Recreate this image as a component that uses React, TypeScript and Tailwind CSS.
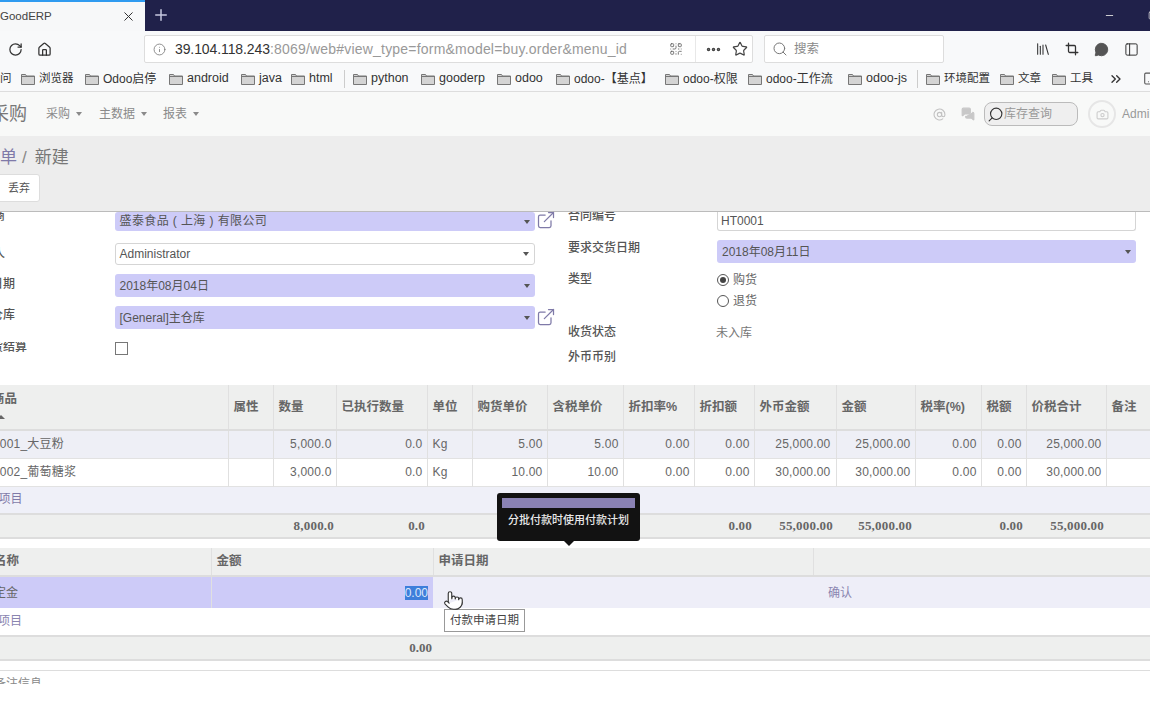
import type { ReactNode } from "react"
import { AtSign, Camera, ChevronsRight, Crop, Ellipsis, ExternalLink, Home, Info, Library, MessageCircle, MessagesSquare, PanelLeft, Pointer, QrCode, RotateCw, Search, Smartphone, Star, X, Plus, Minus, Square } from "lucide-react"

const SANS = "font-['Liberation_Sans','Noto_Sans_CJK_SC',sans-serif]"

const bookmarks = [
  { name: "浏览器", width: "w-[64px]", size: "text-[11.5px]" },
  { name: "Odoo启停", width: "w-[84px]", size: "text-[12px]" },
  { name: "android", width: "w-[72px]", size: "text-[12.5px]" },
  { name: "java", width: "w-[50px]", size: "text-[12.5px]" },
  { name: "html", width: "w-[53px]", size: "text-[12.5px]" },
  { sep: true, width: "w-[9px]" },
  { name: "python", width: "w-[68px]", size: "text-[12.5px]" },
  { name: "gooderp", width: "w-[76px]", size: "text-[12.5px]" },
  { name: "odoo", width: "w-[59px]", size: "text-[12.5px]" },
  { name: "odoo-【基点】", width: "w-[109px]", size: "text-[12px]" },
  { name: "odoo-权限", width: "w-[83px]", size: "text-[12px]" },
  { name: "odoo-工作流", width: "w-[100px]", size: "text-[12px]" },
  { name: "odoo-js", width: "w-[69px]", size: "text-[12.5px]" },
  { sep: true, width: "w-[9px]" },
  { name: "环境配置", width: "w-[74px]", size: "text-[11.5px]" },
  { name: "文章", width: "w-[52px]", size: "text-[11.5px]" },
  { name: "工具", width: "w-[56px]", size: "text-[11.5px]" },
]

const columns = [228, 45, 63, 91, 45, 75, 76, 71, 60, 82, 79, 66, 45, 80, 44]
const headers = ["属性", "数量", "已执行数量", "单位", "购货单价", "含税单价", "折扣率%", "折扣额", "外币金额", "金额", "税率(%)", "税额", "价税合计", "备注"]

const lines = [
  { code: "0001_大豆粉", qty: "5,000.0", price: "5.00", amount: "25,000.00", bg: "bg-[#eeeff6]" },
  { code: "0002_葡萄糖浆", qty: "3,000.0", price: "10.00", amount: "30,000.00", bg: "bg-white" },
]

function Folder() {
  return (
    <svg width="14" height="12" viewBox="0 0 14 12" className="shrink-0">
      <path d="M.5 1.5h4l1 1.5h8v8.5H.5z" fill="#d4d4d4" stroke="#777" />
      <path d="M.5 3.5h13" stroke="#777" />
    </svg>
  )
}

function Caret({ className = "border-t-[#555]" }: { className?: string }) {
  return <span className={`inline-block border-x-[3.5px] border-t-[4px] border-x-transparent ${className}`} />
}

function Field({ value, required, className = "" }: { value: string; required?: boolean; className?: string }) {
  const tone = required ? "bg-[#cdcbf8] pl-[5px]" : "bg-white border border-[#d5d5d5] pl-[4px]"
  return (
    <div className={`flex h-full items-center justify-between rounded-[3px] pr-[5px] text-[12px] text-[#555] ${tone}`}>
      <span className={className}>{value}</span>
      <Caret />
    </div>
  )
}

function NavItem({ label }: { label: string }) {
  return (
    <span className="flex shrink-0 items-center gap-[6px] whitespace-nowrap text-[12px] text-[#8a8a8a]">
      {label}
      <Caret className="border-t-[#8a8a8a]" />
    </span>
  )
}

function LeftRow({ label, offset, height, mt, children }: { label: string; offset: string; height: string; mt: string; children: ReactNode }) {
  return (
    <div className={`flex ${height} ${mt}`}>
      <div className="w-[114.5px] shrink-0 overflow-hidden">
        <span className={`block whitespace-nowrap text-[12px] font-medium text-[#555] ${offset}`}>{label}</span>
      </div>
      <div className="w-[420.5px] shrink-0">{children}</div>
    </div>
  )
}

export default function App() {
  return (
    <div className={`relative flex h-[719px] w-[1150px] flex-col overflow-hidden bg-white ${SANS}`}>
      {/* browser tab strip */}
      <div className="flex h-[31px] shrink-0 items-stretch bg-[#20214a]">
        <div className="flex w-[145px] items-center justify-between border-t-2 border-[#2f9bf0] bg-[#f7f8f9] pr-[9px] text-[11.5px] text-[#444]">
          <span>GoodERP</span>
          <X size={15} strokeWidth={1.6} className="text-[#333]" />
        </div>
        <Plus size={18} strokeWidth={2} className="ml-[7px] mt-[6px] text-[#c6c8df]" />
        <div className="ml-auto flex items-center">
          <Minus size={11} className="text-[#ddd]" />
          <Square size={9} className="ml-[33px] mr-[-7px] text-[#ddd]" />
        </div>
      </div>

      {/* browser toolbar */}
      <div className="flex h-[35px] shrink-0 items-center bg-[#f8f9fa] pt-[1px] text-[#333]">
        <RotateCw size={15} strokeWidth={2} className="ml-[8px]" />
        <Home size={15} strokeWidth={2} className="ml-[14px]" />
        <div className="ml-[92px] flex h-[28px] w-[609px] items-center rounded-[2px] border border-[#ddd] bg-white">
          <Info size={13} strokeWidth={1.5} className="ml-[8px] text-[#777]" />
          <div className="ml-[9px] w-[452px] overflow-hidden whitespace-nowrap text-[14px] tracking-[-0.1px] text-[#999]">
            <span className="text-[#333]">39.104.118.243</span>
            <span className="tracking-[0.2px]">:8069/web#view_type=form&amp;model=buy.order&amp;menu_id</span>
          </div>
          <QrCode size={14} strokeWidth={1.5} className="ml-[42px] text-[#666]" />
          <div className="ml-[12px] h-[26px] w-px bg-[#e8e8e8]" />
          <Ellipsis size={17} strokeWidth={3} className="ml-[9px] text-[#444]" />
          <Star size={16} strokeWidth={1.8} className="ml-[10px] text-[#444]" />
        </div>
        <div className="ml-[11px] flex h-[28px] w-[180px] items-center rounded-[2px] border border-[#ddd] bg-white">
          <Search size={16} strokeWidth={1.5} className="ml-[7px] text-[#777]" />
          <span className="ml-[6px] text-[12.5px] text-[#8a8a8a]">搜索</span>
        </div>
        <Library size={16} strokeWidth={1.6} className="ml-[91px]" />
        <Crop size={14} strokeWidth={2.2} className="ml-[14px]" />
        <MessageCircle size={15} fill="#555" strokeWidth={1.5} className="ml-[15px] text-[#555]" />
        <PanelLeft size={15} strokeWidth={1.6} className="ml-[15px]" />
      </div>

      {/* bookmarks bar */}
      <div className="flex h-[26px] shrink-0 items-center border-b border-[#ddd] bg-[#f8f9fa] text-[#333]">
        <span className="w-[21px] shrink-0 text-[11.5px]">问</span>
        {bookmarks.map((item, i) =>
          item.sep ? (
            <div key={i} className={`${item.width} h-[18px] shrink-0`}>
              <div className="h-full w-px bg-[#ccc]" />
            </div>
          ) : (
            <div key={i} className={`${item.width} ${item.size} flex shrink-0 items-center gap-[4px] whitespace-nowrap`}>
              <Folder />
              <span>{item.name}</span>
            </div>
          ),
        )}
        <ChevronsRight size={16} className="ml-[0px] shrink-0" />
        <Smartphone size={13} className="ml-[18px] shrink-0 text-[#555]" />
      </div>

      {/* app navbar */}
      <div className="flex h-[44px] shrink-0 items-center bg-[#f8f9f8]">
        <span className="-ml-[9px] w-[55px] shrink-0 text-[18px] text-[#777]">采购</span>
        <NavItem label="采购" />
        <div className="w-[17px] shrink-0" />
        <NavItem label="主数据" />
        <div className="w-[16px] shrink-0" />
        <NavItem label="报表" />
        <AtSign size={13} className="ml-[734px] shrink-0 text-[#c2c2c2]" />
        <MessagesSquare size={14} fill="#c8c8c8" className="ml-[15px] shrink-0 text-[#c8c8c8]" />
        <div className="ml-[9px] flex h-[24px] w-[94px] shrink-0 items-center rounded-[8px] border border-[#bbb] bg-[#efefef]">
          <Search size={17} strokeWidth={1.6} className="ml-[2px] -scale-x-100 text-[#333]" />
          <span className="text-[12px] text-[#999]">库存查询</span>
        </div>
        <div className="ml-[10px] flex h-[28px] w-[28px] shrink-0 items-center justify-center rounded-full border-2 border-[#e6e6e6]">
          <Camera size={13} className="text-[#ccc]" />
        </div>
        <span className="ml-[6px] shrink-0 text-[12px] text-[#999]">Admin</span>
      </div>

      {/* control panel */}
      <div className="h-[76px] shrink-0 border-b border-[#bbb] bg-[#ededed]">
        <div className="-ml-[17px] mt-[11px] flex h-[22px] items-center text-[17px]">
          <span className="text-[#7f7aa8]">订单</span>
          <span className="ml-[5px] text-[#888]">/</span>
          <span className="ml-[8px] text-[#777]">新建</span>
        </div>
        <div className="-ml-[4px] mt-[5px] flex h-[28px] w-[44px] items-center justify-center rounded-[3px] border border-[#ddd] bg-white text-[11px] text-[#555]">
          <span className="ml-[2px]">丢弃</span>
        </div>
      </div>

      {/* form header, scrolled so the first row is cut */}
      <div className="flex h-[173px] shrink-0">
        <div className="w-[568px] shrink-0">
          <div className="flex h-[19px]">
            <div className="w-[114.5px] shrink-0 overflow-hidden">
              <span className="-ml-[7px] -mt-[5px] block whitespace-nowrap text-[12px] font-medium text-[#555]">商</span>
            </div>
            <div className="w-[420.5px] shrink-0"><Field value="盛泰食品 ( 上海 ) 有限公司" required className="-mt-[1px] tracking-[0.4px]" /></div>
            <ExternalLink size={20} strokeWidth={1.5} className="ml-[1px] -mt-[2px] text-[#7f7aa8]" />
          </div>
          <LeftRow label="负责人" offset="-ml-[31px] mt-[2px]" height="h-[22px]" mt="mt-[12px]">
            <Field value="Administrator" />
          </LeftRow>
          <LeftRow label="单据日期" offset="-ml-[33px] mt-[1px]" height="h-[23px]" mt="mt-[9px]">
            <Field value="2018年08月04日" required />
          </LeftRow>
          <div className="mt-[9px] flex h-[23px]">
            <div className="w-[114.5px] shrink-0 overflow-hidden">
              <span className="-ml-[33px] block whitespace-nowrap text-[12px] font-medium text-[#555]">调入仓库</span>
            </div>
            <div className="w-[420.5px] shrink-0"><Field value="[General]主仓库" required /></div>
            <ExternalLink size={20} strokeWidth={1.5} className="ml-[1px] mt-[1px] text-[#7f7aa8]" />
          </div>
          <div className="mt-[13px] flex h-[14px]">
            <div className="w-[114.5px] shrink-0 overflow-hidden">
              <span className="-ml-[33px] -mt-[4px] block whitespace-nowrap text-[12px] font-medium text-[#555]">按收货结算</span>
            </div>
            <div className="h-[13px] w-[13px] border border-[#777] bg-white" />
          </div>
        </div>
        <div className="w-[568px] shrink-0 text-[12px] font-medium text-[#555]">
          <div className="flex h-[19px]">
            <div className="w-[149px] shrink-0 overflow-hidden"><span className="-mt-[5px] block">合同编号</span></div>
            <div className="flex h-[19px] w-[419px] items-center rounded-b-[3px] border border-t-0 border-[#d5d5d5] pl-[3px] text-[12px] font-normal text-[#555]">HT0001</div>
          </div>
          <div className="mt-[9px] flex h-[23px]">
            <div className="-mt-[1px] w-[149px] shrink-0">要求交货日期</div>
            <div className="w-[419px] font-normal"><Field value="2018年08月11日" required /></div>
          </div>
          <div className="mt-[7px] flex h-[48px]">
            <div className="w-[149px] shrink-0">类型</div>
            <div className="flex flex-col gap-[3px] pt-[1px] text-[12px] font-normal text-[#666]">
              <label className="flex items-center gap-[4px]">
                <span className="flex h-[12px] w-[12px] items-center justify-center rounded-full border border-[#555]">
                  <span className="h-[6px] w-[6px] rounded-full bg-[#444]" />
                </span>
                购货
              </label>
              <label className="flex items-center gap-[4px]">
                <span className="h-[12px] w-[12px] rounded-full border border-[#555]" />
                退货
              </label>
            </div>
          </div>
          <div className="mt-[5px] flex h-[18px]">
            <div className="w-[148px] shrink-0">收货状态</div>
            <div className="mt-[1px] text-[12px] font-normal text-[#777]">未入库</div>
          </div>
          <div className="mt-[7px]">外币币别</div>
        </div>
      </div>

      {/* order lines */}
      <table className="w-[1150px] shrink-0 table-fixed border-collapse text-[12px] text-[#666]">
        <colgroup>
          {columns.map((w, i) => (
            <col key={i} style={{ width: w }} />
          ))}
        </colgroup>
        <thead>
          <tr className="h-[45px] border-b-2 border-[#ddd] bg-[#eeefee] text-left font-bold text-[#666]">
            <th className="overflow-hidden p-0 align-top">
              <span className="-ml-[8px] mt-[5px] block text-[12.5px]">商品</span>
              <span className="ml-[-3px] mt-[6px] block h-0 w-0 border-x-[4px] border-b-[4px] border-x-transparent border-b-[#666]" />
            </th>
            {headers.map((h) => (
              <th key={h} className="border-l border-[#e0e0e0] pl-[5px] text-[12.5px] font-bold">{h}</th>
            ))}
          </tr>
        </thead>
        <tbody className="tracking-[0.2px]">
          {lines.map((row) => (
            <tr key={row.code} className={`h-[28px] border-b border-[#e2e2e2] text-right ${row.bg}`}>
              <td className="overflow-hidden text-left">
                <span className="-ml-[7px] block whitespace-nowrap">{row.code}</span>
              </td>
              <td className="border-l border-[#e0e0e0]" />
              <td className="border-l border-[#e0e0e0] pr-[4px]">{row.qty}</td>
              <td className="border-l border-[#e0e0e0] pr-[4px]">0.0</td>
              <td className="border-l border-[#e0e0e0] pl-[5px] text-left">Kg</td>
              <td className="border-l border-[#e0e0e0] pr-[4px]">{row.price}</td>
              <td className="border-l border-[#e0e0e0] pr-[4px]">{row.price}</td>
              <td className="border-l border-[#e0e0e0] pr-[4px]">0.00</td>
              <td className="border-l border-[#e0e0e0] pr-[4px]">0.00</td>
              <td className="border-l border-[#e0e0e0] pr-[5px]">{row.amount}</td>
              <td className="border-l border-[#e0e0e0] pr-[4px]">{row.amount}</td>
              <td className="border-l border-[#e0e0e0] pr-[4px]">0.00</td>
              <td className="border-l border-[#e0e0e0] pr-[4px]">0.00</td>
              <td className="border-l border-[#e0e0e0] pr-[4px]">{row.amount}</td>
              <td className="border-l border-[#e0e0e0]" />
            </tr>
          ))}
          <tr className="h-[28px] bg-[#eff0f8]">
            <td colSpan={15} className="overflow-hidden">
              <span className="-ml-[26px] -mt-[1px] block text-[#7f7aa8]">添加项目</span>
            </td>
          </tr>
          <tr className="h-[24px] border-y-2 border-[#ddd] bg-[#eeefee] text-right font-['Liberation_Serif',serif] text-[13px] font-bold text-[#666]">
            <td />
            <td />
            <td className="pr-[2px]">8,000.0</td>
            <td className="pr-[2px]">0.0</td>
            <td />
            <td />
            <td />
            <td />
            <td className="pr-[2px]">0.00</td>
            <td className="pr-[3px]">55,000.00</td>
            <td className="pr-[3px]">55,000.00</td>
            <td />
            <td className="pr-[3px]">0.00</td>
            <td className="pr-[2px]">55,000.00</td>
            <td />
          </tr>
        </tbody>
      </table>

      {/* payment plan */}
      <table className="mt-[9px] w-[1150px] shrink-0 table-fixed border-collapse text-[12px] text-[#666]">
        <colgroup>
          <col className="w-[211px]" />
          <col className="w-[222px]" />
          <col className="w-[380px]" />
          <col />
        </colgroup>
        <thead>
          <tr className="h-[28px] border-b-2 border-[#ddd] bg-[#eeefee] text-left text-[12.5px] font-bold">
            <th className="overflow-hidden font-bold"><span className="-ml-[6px] block">名称</span></th>
            <th className="border-l border-[#e0e0e0] pl-[5px] font-bold">金额</th>
            <th className="border-l border-[#e0e0e0] pl-[5px] font-bold">申请日期</th>
            <th className="border-l border-[#e0e0e0]" />
          </tr>
        </thead>
        <tbody>
          <tr className="h-[32px] bg-[#eeeef8]">
            <td className="overflow-hidden bg-[#cdcbf8]"><span className="-ml-[6px] block">定金</span></td>
            <td className="border-l border-[#e0e0e0] bg-[#cdcbf8] pr-[5px] text-right">
              <span className="bg-[#3d7edb] text-[#dfe8fa]">0.00</span>
            </td>
            <td />
            <td className="pl-[15px] text-[#8a85b0]">确认</td>
          </tr>
          <tr className="h-[28px] bg-white">
            <td colSpan={4} className="overflow-hidden"><span className="-ml-[26px] -mt-[1px] block text-[#8a85b0]">添加项目</span></td>
          </tr>
          <tr className="h-[24px] border-y-2 border-[#ddd] bg-[#eeefee] font-['Liberation_Serif',serif] text-[13px] font-bold">
            <td />
            <td className="pr-[1px] text-right">0.00</td>
            <td />
            <td />
          </tr>
        </tbody>
      </table>

      {/* notes tab, cut by the end of the page area */}
      <div className="mt-[9px] h-[14px] shrink-0 overflow-hidden border-t border-[#ddd] text-[12px] text-[#888]">
        <span className="-ml-[6px] mt-[4px] block">备注信息</span>
      </div>

      {/* dark tooltip over the tables */}
      <div className="absolute left-[497px] top-[493px] h-[48px] w-[143px] rounded-[3px] bg-[#121212] px-[5px] pt-[5px] text-center text-[11px] font-medium text-[#e8e8e8]">
        <div className="h-[10px] bg-[#8a82b4]" />
        <div className="mt-[4px]">分批付款时使用付款计划</div>
        <div className="absolute left-[67px] top-[48px] h-0 w-0 border-x-[5px] border-t-[5px] border-x-transparent border-t-[#121212]" />
      </div>

      {/* native title tooltip and pointer */}
      <div className="absolute left-[444px] top-[609px] flex h-[23px] w-[81px] items-center justify-center border border-[#999] bg-white text-[11.5px] text-[#444]">付款申请日期</div>
      <Pointer size={21} fill="#fff" strokeWidth={1.3} className="absolute left-[443px] top-[590px] text-[#333]" />
    </div>
  )
}
